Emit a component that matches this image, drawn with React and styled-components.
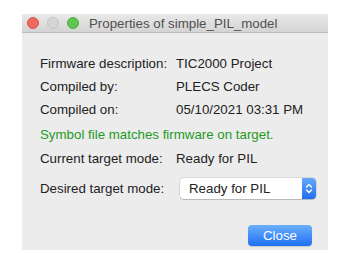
import React from "react";
import styled, { createGlobalStyle } from "styled-components";

const GlobalStyle = createGlobalStyle`
  html, body {
    margin: 0;
    padding: 0;
    background: #ffffff;
  }
  body {
    font-family: "Liberation Sans", Arial, sans-serif;
    font-size: 13.3px;
    color: #222222;
  }
`;

const Window = styled.div`
  margin: 14px 0 0 22px;
  width: 306px;
  height: 236px;
  background: #ececec;
  display: flex;
  flex-direction: column;
`;

const TitleBar = styled.div`
  height: 18px;
  display: flex;
  align-items: center;
  padding-left: 5px;
  background: linear-gradient(#e9e9e9, #d4d4d4);
  border-bottom: 1px solid #bdbdbd;
`;

const Light = styled.span`
  width: 12px;
  height: 12px;
  border-radius: 50%;
  margin-right: 8px;
  background: ${(p) => p.color};
  box-sizing: border-box;
  border: 1px solid ${(p) => p.edge};
`;

const Title = styled.span`
  margin-left: 2px;
  font-size: 13.3px;
  color: #505050;
`;

const Content = styled.div`
  flex: 1;
  display: flex;
  flex-direction: column;
  padding: 19px 12px 0 18px;
`;

const Row = styled.div`
  display: grid;
  grid-template-columns: 136px 1fr;
  line-height: 23px;
  margin-top: ${(p) => p.gap || 0}px;
`;

const Label = styled.span`
  white-space: nowrap;
`;

const Message = styled.div`
  line-height: 23px;
  margin-top: 2px;
  color: #1f9a1f;
  white-space: nowrap;
`;

const SelectRow = styled.div`
  display: grid;
  grid-template-columns: 140px 1fr;
  align-items: center;
  height: 21px;
  margin-top: 8px;
`;

const Select = styled.div`
  height: 21px;
  display: flex;
  align-items: center;
  background: #ffffff;
  border-radius: 4px;
  box-shadow: 0 0 0 0.5px rgba(0, 0, 0, 0.18), 0 1px 1px rgba(0, 0, 0, 0.15);
  overflow: hidden;
`;

const SelectText = styled.span`
  flex: 1;
  padding-left: 9px;
`;

const Stepper = styled.span`
  width: 14px;
  height: 100%;
  display: flex;
  align-items: center;
  justify-content: center;
  background: linear-gradient(#66a8fb, #1f6ff2);
`;

const Footer = styled.div`
  display: flex;
  justify-content: flex-end;
  margin-top: 26px;
  padding-right: 4px;
`;

const Button = styled.button`
  width: 64px;
  height: 21px;
  border: none;
  border-radius: 4px;
  padding: 0;
  font-family: inherit;
  font-size: 13.3px;
  color: #ffffff;
  background: linear-gradient(#6cb0fc, #1d6ff3);
  box-shadow: 0 1px 1px rgba(0, 0, 0, 0.15);
`;

const App = () => {
  return (
    <>
      <GlobalStyle />
      <Window>
        <TitleBar>
          <Light color="#ee6a5f" edge="#d8574c" />
          <Light color="#d6d6d6" edge="#c4c4c4" />
          <Light color="#5fc553" edge="#4aae3f" />
          <Title>Properties of simple_PIL_model</Title>
        </TitleBar>
        <Content>
          <Row>
            <Label>Firmware description:</Label>
            <span>TIC2000 Project</span>
          </Row>
          <Row>
            <Label>Compiled by:</Label>
            <span>PLECS Coder</span>
          </Row>
          <Row>
            <Label>Compiled on:</Label>
            <span>05/10/2021 03:31 PM</span>
          </Row>
          <Message>Symbol file matches firmware on target.</Message>
          <Row gap={1}>
            <Label>Current target mode:</Label>
            <span>Ready for PIL</span>
          </Row>
          <SelectRow>
            <Label>Desired target mode:</Label>
            <Select>
              <SelectText>Ready for PIL</SelectText>
              <Stepper>
                <svg width="8" height="13" viewBox="0 0 8 13" fill="none" stroke="#fff" strokeWidth="1.4" strokeLinecap="round" strokeLinejoin="round">
                  <path d="M1.5 5 L4 2.5 L6.5 5" />
                  <path d="M1.5 8 L4 10.5 L6.5 8" />
                </svg>
              </Stepper>
            </Select>
          </SelectRow>
          <Footer>
            <Button>Close</Button>
          </Footer>
        </Content>
      </Window>
    </>
  );
};

export default App;
